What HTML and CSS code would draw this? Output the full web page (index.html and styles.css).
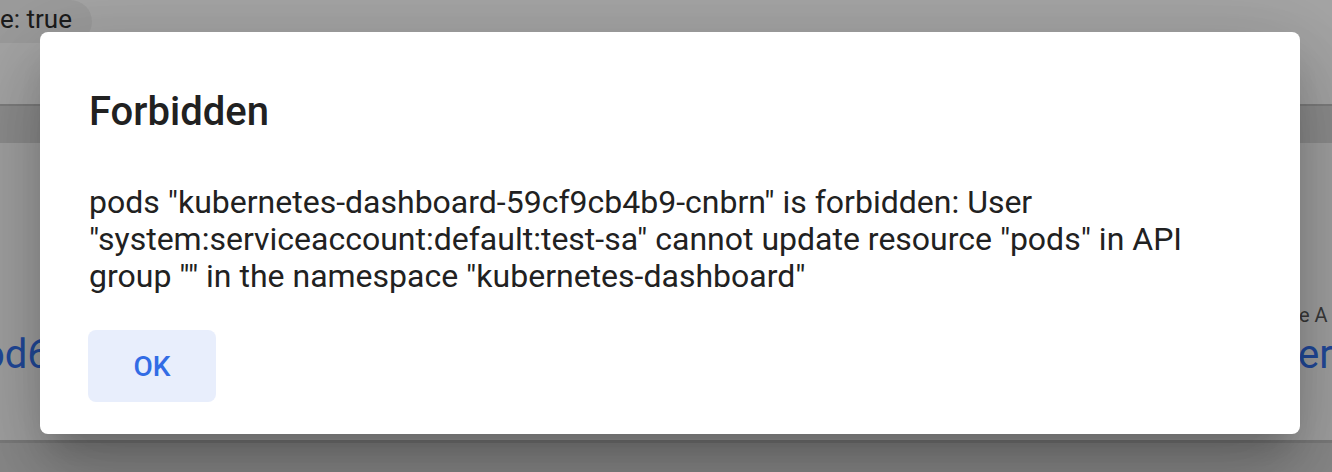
FILE: index.html
```html
<!DOCTYPE html>
<html lang="en">
<head>
<meta charset="utf-8">
<title>Forbidden</title>
<link rel="stylesheet" href="styles.css">
</head>
<body>
<div class="page">
  <header class="toolbar">
    <div class="chip">e: true</div>
  </header>
  <nav class="tabs"></nav>
  <main class="card">
    <div class="card-row">
      <div class="cell cell-left">
        <span class="link">od6</span>
      </div>
      <div class="cell cell-right">
        <span class="label">e A</span>
        <span class="link">er</span>
      </div>
    </div>
  </main>
  <footer class="footer"></footer>
</div>
<div class="backdrop">
  <div class="dialog" role="dialog">
    <h1 class="dialog-title">Forbidden</h1>
    <div class="dialog-content">pods "kubernetes-dashboard-59cf9cb4b9-cnbrn" is forbidden: User "system:serviceaccount:default:test-sa" cannot update resource "pods" in API group "" in the namespace "kubernetes-dashboard"</div>
    <div class="dialog-actions">
      <button class="btn-ok" type="button">OK</button>
    </div>
  </div>
</div>
</body>
</html>
```
FILE: styles.css
```css
html, body {
  margin: 0;
  padding: 0;
}
body {
  width: 1332px;
  height: 472px;
  overflow: hidden;
  font-family: Roboto, "Liberation Sans", Arial, sans-serif;
  background: #ececec;
  position: relative;
}
.page {
  display: flex;
  flex-direction: column;
  height: 472px;
}
.toolbar {
  height: 104px;
  background: #f4f4f4;
  border-bottom: 2px solid #b8b8b8;
  display: flex;
  align-items: flex-start;
}
.chip {
  height: 43px;
  padding: 0 20px 0 0;
  background: #e6e6e6;
  border-radius: 0 22px 22px 0;
  font-size: 26px;
  line-height: 38px;
  color: #2a2a2a;
}
.tabs {
  height: 37px;
  background: #d0d0d0;
}
.card {
  height: 297px;
  background: #eeeeee;
  border-bottom: 3px solid #b5b5b5;
}
.card-row {
  display: flex;
  justify-content: space-between;
  padding-top: 161px;
}
.cell {
  display: flex;
  flex-direction: column;
  align-items: flex-start;
}
.cell-left {
  margin-left: -18px;
  padding-top: 27px;
}
.cell-right {
  width: 80px;
  margin-right: -41px;
}
.label {
  font-size: 20px;
  color: #555555;
  line-height: 23px;
  padding-left: 6px;
}
.link {
  font-size: 40px;
  color: #326ce5;
  line-height: 48px;
}
.cell-right .link {
  margin-top: 4px;
  padding-left: 5px;
}
.footer {
  flex: 1;
  background: #cbcbcb;
}
.backdrop {
  position: absolute;
  inset: 0;
  background: rgba(0, 0, 0, 0.32);
  padding: 32px 32px 0 40px;
}
.dialog {
  box-sizing: border-box;
  width: 1260px;
  height: 402px;
  background: #ffffff;
  border-radius: 8px;
  padding: 48px 48px 32px 49px;
  box-shadow: 0 22px 30px -14px rgba(0, 0, 0, 0.2), 0 48px 76px 6px rgba(0, 0, 0, 0.14), 0 18px 92px 16px rgba(0, 0, 0, 0.12);
  display: flex;
  flex-direction: column;
}
.dialog-title {
  margin: 0 0 40px;
  font-size: 40px;
  line-height: 64px;
  font-weight: 500;
  color: #212121;
}
.dialog-content {
  font-size: 32px;
  line-height: 37px;
  color: #212121;
}
.dialog-actions {
  margin-top: auto;
  display: flex;
}
.btn-ok {
  width: 128px;
  height: 72px;
  margin-left: -1px;
  border: none;
  border-radius: 8px;
  background: #e8eefc;
  color: #326ce5;
  font-family: Roboto, "Liberation Sans", Arial, sans-serif;
  font-size: 28px;
  font-weight: 500;
  padding: 0;
}
```
